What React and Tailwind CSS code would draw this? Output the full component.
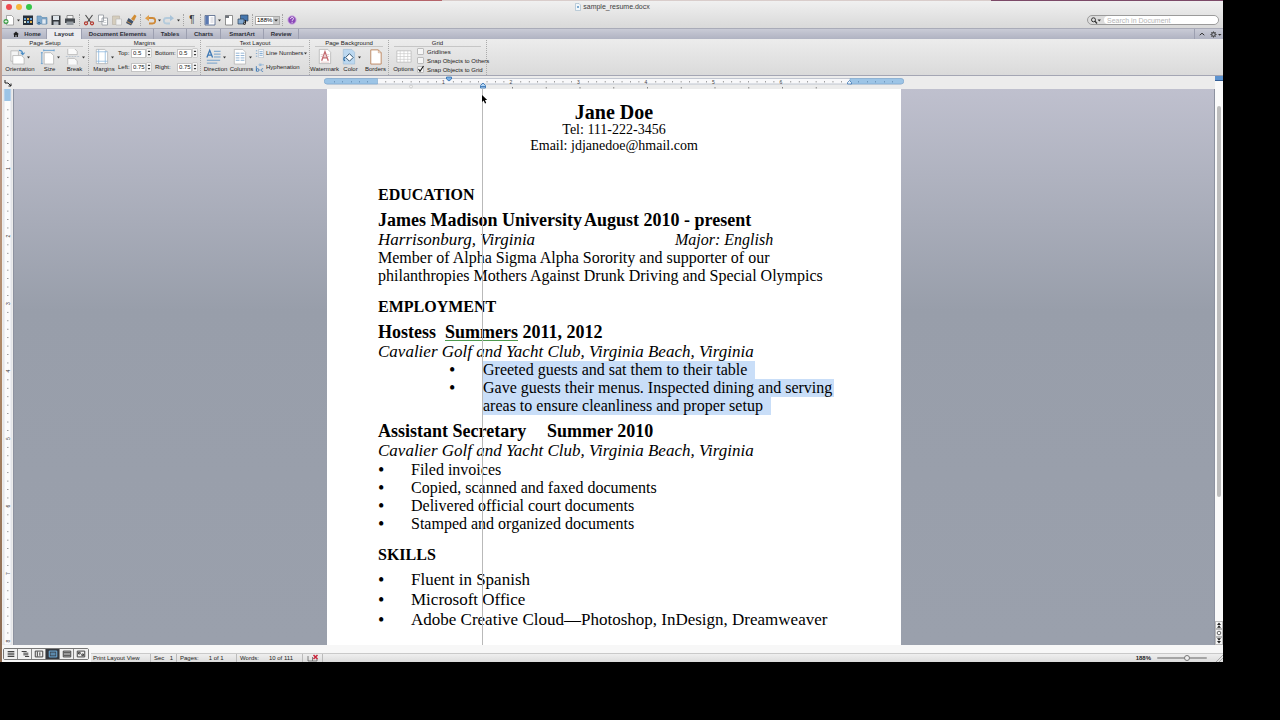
import { useState } from "react";

// Toolbar bits
function Arrow() {
  return (
    <svg viewBox="0 0 5 12" className="w-[5px] h-3 shrink-0" aria-hidden="true">
      <path d="M1 5.500h3L2.500 7.500z" fill="#333" />
    </svg>
  );
}

function Sep() {
  return (
    <div className="w-[5px] flex justify-center shrink-0">
      <div className="h-3 border-l border-dotted border-[#a5a5a5]" />
    </div>
  );
}

function Tool({ label, children }) {
  return (
    <button aria-label={label} className="w-[14px] h-[14px] shrink-0 flex items-center justify-center">
      <svg viewBox="0 0 12 12" className="w-3 h-3" fill="none">
        {children}
      </svg>
    </button>
  );
}

function Toolbar() {
  return (
    <div className="flex items-center h-[14px]">
      <Tool label="New">
        <path d="M3.500 1.500h5l2 2v7.500h-7z" fill="#fff" stroke="#888" strokeWidth=".7" />
        <circle cx="3" cy="7.500" r="2.500" fill="#3e9c46" />
        <path d="M1.500 7.500h3M3 6v3" stroke="#fff" strokeWidth=".8" />
      </Tool>
      <Arrow />
      <Tool label="Gallery">
        <path d="M1 1.500h10v9.500H1z" fill="#27303b" />
        <path d="M2 4h2v2H2zM8 4h2v2H8zM5 7h2v2H5z" fill="#69a7dc" />
        <path d="M5 4h2v2H5zM8 7h2v2H8z" fill="#e3b04c" />
        <path d="M2 7h2v2H2z" fill="#d9e4d2" />
      </Tool>
      <Tool label="Open">
        <path d="M1 2h4l1 1.500h5V10H1z" fill="#7fa9cc" stroke="#5886ad" strokeWidth=".6" />
        <path d="M6 5h4v5H6z" fill="#dfeaf4" stroke="#6d8fae" strokeWidth=".5" />
        <path d="M3 11V8m-1.500 1.500L3 8l1.500 1.500" stroke="#3b6b97" />
      </Tool>
      <Tool label="Save">
        <path d="M1.500 1.500h9v9.500h-9z" fill="#34383d" />
        <path d="M3 2h6v4H3z" fill="#dfe5ea" />
        <path d="M3.500 7.500h5V11h-5z" fill="#b7bdc4" />
      </Tool>
      <Tool label="Print">
        <path d="M3 1.500h6V5H3z" fill="#f3f3f3" stroke="#555" strokeWidth=".6" />
        <path d="M1 4.500h10V9H1z" fill="#44484d" />
        <path d="M2.500 7.500h7V11h-7z" fill="#93999f" />
      </Tool>
      <Sep />
      <Tool label="Cut">
        <path d="M2.500 1l5 7M9.500 1l-5 7" stroke="#4b4b4b" strokeWidth="1.100" />
        <circle cx="3" cy="9.300" r="1.500" stroke="#b3372c" strokeWidth="1.200" />
        <circle cx="9" cy="9.300" r="1.500" stroke="#b3372c" strokeWidth="1.200" />
      </Tool>
      <Tool label="Copy">
        <path d="M1.500 1h5v6.500h-5zM5 4h5.500v7H5z" fill="#fff" stroke="#8f959c" strokeWidth=".8" />
        <path d="M6.300 6.500h3M6.300 8.500h3" stroke="#b3b8bd" strokeWidth=".6" />
      </Tool>
      <Tool label="Paste">
        <path d="M1.500 2h7v8.500h-7z" fill="#d5cdbd" stroke="#b8b0a2" strokeWidth=".6" />
        <path d="M5 5h5.500v6H5z" fill="#f1f1f1" stroke="#b5b5b5" strokeWidth=".6" />
      </Tool>
      <Tool label="Format painter">
        <path d="M6 5L9.500.5l2 1.500L9 7z" fill="#d18d34" />
        <path d="M3.500 4l5 3.500-2.500 4-5-2.500z" fill="#41536c" />
        <path d="M2 7.500l4.500 2.500" stroke="#c88c45" />
      </Tool>
      <Sep />
      <Tool label="Undo">
        <path d="M4 4h4.500a2.500 2.500 0 010 5.500H5" stroke="#cf8a38" strokeWidth="1.800" />
        <path d="M5 1L1 4.200l4 3z" fill="#e0a04c" />
      </Tool>
      <Arrow />
      <Tool label="Redo">
        <path d="M8 4H3.500a2.500 2.500 0 000 5.500H7" stroke="#b4cbdc" strokeWidth="1.800" />
        <path d="M7 1l4 3.200-4 3z" fill="#a9c3d8" />
      </Tool>
      <Arrow />
      <Sep />
      <button aria-label="Show formatting" className="w-3 text-[10px] leading-3 text-[#333]">¶</button>
      <Sep />
      <Tool label="Sidebar">
        <path d="M1 1.500h10v9.500H1z" fill="#fff" stroke="#4d5f85" strokeWidth=".8" />
        <path d="M1.300 2h3.500v8.500H1.300z" fill="#5a78b0" />
        <path d="M6.500 4h3M6.500 6h3M6.500 8h3" stroke="#aab" strokeWidth=".6" />
      </Tool>
      <Arrow />
      <Tool label="Toolbox">
        <path d="M2.500 1.500h7V11h-7z" fill="#fff" stroke="#777" strokeWidth=".8" />
        <path d="M2 1.500h4v2.500H2z" fill="#70757c" />
      </Tool>
      <Tool label="Media browser">
        <path d="M3.500 1h7.500v6H3.500z" fill="#4576ae" stroke="#2d3f56" strokeWidth=".7" />
        <path d="M1 5h6v5H1z" fill="#82a8cf" stroke="#2d3f56" strokeWidth=".7" />
        <path d="M8.500 6v3.500a1 1 0 11-1-1" stroke="#222" />
      </Tool>
      <Sep />
      <div className="relative">
        <select
          aria-label="Zoom"
          defaultValue="188%"
          className="appearance-none block w-[25px] h-[9px] pl-px border border-[#aaa] bg-white text-[6px] leading-[7px] text-black"
        >
          <option>188%</option>
          <option>100%</option>
        </select>
        <div className="absolute right-px top-px w-[6px] h-[7px] bg-[#c9c9c9] pointer-events-none flex items-center justify-center">
          <svg viewBox="0 0 4 3" className="w-1 h-[3px]"><path d="M0 .5h4l-2 2z" fill="#333" /></svg>
        </div>
      </div>
      <Sep />
      <Tool label="Help">
        <circle cx="6" cy="6" r="4.200" fill="#8b48b8" stroke="#d3b8e2" />
        <path d="M4.600 4.900c0-2 2.900-1.900 2.900-.2 0 1-1.400 1.100-1.400 2.100M6.100 7.800v1" stroke="#fff" strokeWidth=".9" />
      </Tool>
    </div>
  );
}

function TitleBar() {
  return (
    <header className="h-[27px] shrink-0 bg-linear-to-b from-[#f0f0f0] to-[#d9d9d9] flex flex-col">
      <div className="grid grid-cols-3 items-center h-[12px]">
        <div className="flex gap-1 pl-1">
          <button aria-label="Close" className="size-[6px] rounded-full bg-[#ee4b50]" />
          <button aria-label="Minimize" className="size-[6px] rounded-full bg-[#f6b53b]" />
          <button aria-label="Zoom window" className="size-[6px] rounded-full bg-[#35c649]" />
        </div>
        <div className="flex items-center justify-center gap-[2px] text-[7px] leading-[12px] text-[#3c3c3c]">
          <svg viewBox="0 0 6 8" className="w-[6px] h-2">
            <path d="M.5.5h3.500l1.500 1.500v5.500h-5z" fill="#f2f7fb" stroke="#a5bccd" strokeWidth=".7" />
            <path d="M2 3h2v2H2z" fill="#7fabd0" />
          </svg>
          <h1>sample_resume.docx</h1>
        </div>
      </div>
      <div className="flex items-center justify-between pr-1">
        <Toolbar />
        <div className="flex items-center w-[132px] h-[10px] rounded-full border border-[#9b9b9b] bg-[#dcdcdc] overflow-hidden">
          <svg viewBox="0 0 16 9" className="w-4 h-[9px] shrink-0" fill="none">
            <circle cx="5.500" cy="3.800" r="2" stroke="#333" />
            <path d="M7 5.300L9 7.500" stroke="#333" strokeWidth="1.300" />
            <path d="M9.500 3.500h3.500l-1.750 2z" fill="#333" />
          </svg>
          <input
            type="search"
            aria-label="Search in Document"
            placeholder="Search in Document"
            className="flex-1 min-w-0 h-full rounded-full bg-white pl-[3px] text-[7px] leading-[8px] placeholder:text-[#b5b5b5] outline-none"
          />
        </div>
      </div>
    </header>
  );
}

const tabs = [
  { name: "Home", width: "w-[45px]" },
  { name: "Layout", width: "w-[35px]" },
  { name: "Document Elements", width: "w-[72px]" },
  { name: "Tables", width: "w-[33px]" },
  { name: "Charts", width: "w-[34px]" },
  { name: "SmartArt", width: "w-[43px]" },
  { name: "Review", width: "w-[35px]" },
];

function Tabs({ active, onSelect }) {
  return (
    <nav className="h-[11px] shrink-0 flex bg-linear-to-b from-[#c9cbd6] to-[#b0b3c2] border-t border-[#a9abb8]">
      {tabs.map((t) => (
        <button
          key={t.name}
          onClick={() => onSelect(t.name)}
          className={`${t.width} shrink-0 flex items-center justify-center gap-[5px] border-r border-[#9c9fb0] text-[6px] leading-[8px] font-bold text-[#2d2f38] ${
            t.name === "Home" ? "pl-[6px]" : ""
          } ${active === t.name ? "bg-[#ececf0]" : ""}`}
        >
          {t.name === "Home" && (
            <svg viewBox="0 0 6 6" className="size-[6px]"><path d="M3 .5L0 3.300h1V6h1.500V4h1v2H5V3.300h1z" fill="#222" /></svg>
          )}
          <span>{t.name}</span>
        </button>
      ))}
      <div className="ml-auto flex items-center gap-[5px] pl-1 pr-px border-l border-[#9c9fb0]">
        <button aria-label="Collapse ribbon">
          <svg viewBox="0 0 6 6" className="size-[6px]" fill="none"><path d="M.7 4.200L3 2.200l2.300 2" stroke="#333" /></svg>
        </button>
        <button aria-label="Ribbon preferences">
          <svg viewBox="0 0 12 7" className="w-3 h-[7px]" fill="none">
            <circle cx="3.500" cy="3.500" r="1.800" stroke="#444" strokeWidth="1.200" />
            <path d="M3.500.3v1M3.500 5.700v1M.3 3.500h1M5.700 3.500h1M1.200 1.200l.7.700M5.100 5.100l.7.700M1.200 5.800l.7-.7M5.100 1.900l.7-.7" stroke="#444" strokeWidth=".8" />
            <path d="M8 3h3.500L9.750 4.800z" fill="#333" />
          </svg>
        </button>
      </div>
    </nav>
  );
}

function Group({ title, width, children }) {
  return (
    <section className={`${width} shrink-0 flex flex-col border-r border-dotted border-[#aaa] px-px`}>
      <h2 className="text-center text-[6px] leading-[6px] border-b border-[#c6c6c6] mx-1">{title}</h2>
      <div className="flex flex-1">{children}</div>
    </section>
  );
}

function BigButton({ label, width, arrow, children }) {
  return (
    <button className={`${width} shrink-0 flex flex-col items-center justify-start pt-px`}>
      <span className="flex items-center">
        <svg viewBox="0 0 18 18" className="size-[17px]" fill="none">
          {children}
        </svg>
        {arrow && <Arrow />}
      </span>
      <span className="text-[6px] leading-[8px] whitespace-nowrap">{label}</span>
    </button>
  );
}

function MarginField({ label, value, labelWidth }) {
  const id = `margin-${label}`;
  return (
    <div className="flex items-center h-[10px]">
      <label htmlFor={id} className={labelWidth}>{label}:</label>
      <input id={id} defaultValue={value} className="w-[15px] h-[9px] border border-[#c4c4c4] bg-white pl-px text-[6px] leading-[7px]" />
      <svg viewBox="0 0 6 10" className="w-[6px] h-[10px]">
        <rect x=".5" y=".5" width="5" height="9" rx="1" fill="#f5f5f5" stroke="#b5b5b5" strokeWidth=".6" />
        <path d="M1.700 4L3 2.200 4.300 4zM1.700 6L3 7.800 4.300 6z" fill="#222" />
      </svg>
    </div>
  );
}

function Check({ label, checked }) {
  return (
    <label className="relative flex items-center gap-[3px] h-[9px] whitespace-nowrap">
      <input
        type="checkbox"
        defaultChecked={checked}
        className="peer appearance-none size-[7px] rounded-[1px] border border-[#bdbdbd] bg-[#f6f6f6]"
      />
      <svg viewBox="0 0 8 8" className="hidden peer-checked:block absolute left-0 top-0 size-2 pointer-events-none" fill="none">
        <path d="M1.500 4l1.500 2.300L6.500 1" stroke="#111" strokeWidth="1.100" />
      </svg>
      {label}
    </label>
  );
}

function Ribbon() {
  return (
    <div className="h-[37px] shrink-0 pt-px flex bg-linear-to-b from-[#ececec] to-[#dadada] border-b border-[#a4a6b4] text-[6px] leading-[8px] text-[#222]">
      <Group title="Page Setup" width="w-[87px]">
        <BigButton label="Orientation" width="w-[34px]" arrow>
          <path d="M2 3h8v11H2z" fill="#f4f4f4" stroke="#b0b0b0" strokeWidth=".8" />
          <path d="M4 8h9l3 2.500V17H4z" fill="#fff" stroke="#b0b0b0" strokeWidth=".8" />
          <path d="M10.500 2.500c3 0 4 1 4 4M12.500 5l2 2 2-2" stroke="#4f8fc6" strokeWidth="1.200" />
        </BigButton>
        <BigButton label="Size" width="w-[25px]" arrow>
          <path d="M5.500 5h7l3 3v9h-10z" fill="#fff" stroke="#b0b0b0" strokeWidth=".8" />
          <path d="M3 4.500v12M2 5h2M2 16.500h2M5 2.500h11M5 1.500v2M16 1.500v2" stroke="#68a0d0" />
        </BigButton>
        <BigButton label="Break" width="w-[25px]" arrow>
          <path d="M4 1v6h10V3.500L11.500 1M4 17.500V11h7l3 2.500v4" fill="#fafafa" stroke="#b0b0b0" strokeWidth=".8" />
          <path d="M2 9h14" stroke="#b9c3cf" strokeDasharray="2 1" />
        </BigButton>
      </Group>
      <Group title="Margins" width="w-[112px]">
        <BigButton label="Margins" width="w-[28px]" arrow>
          <path d="M3.500 1.500h9l3 3v12h-12z" fill="#fff" stroke="#b0b0b0" strokeWidth=".8" />
          <path d="M6 1.500v15M13 3v13.500M3.500 4h12M3.500 14h12" stroke="#8ab6dd" strokeWidth=".8" />
        </BigButton>
        <div className="flex flex-col gap-1 pt-px">
          <MarginField label="Top" value="0.5" labelWidth="w-[13px]" />
          <MarginField label="Left" value="0.75" labelWidth="w-[13px]" />
        </div>
        <div className="flex flex-col gap-1 pl-[3px] pt-px">
          <MarginField label="Bottom" value="0.5" labelWidth="w-[22px]" />
          <MarginField label="Right" value="0.75" labelWidth="w-[22px]" />
        </div>
      </Group>
      <Group title="Text Layout" width="w-[109px]">
        <BigButton label="Direction" width="w-[27px]" arrow>
          <path d="M2 10L5 2.500 8 10M3.200 7.500h3.600" stroke="#3f79b5" strokeWidth="1.400" />
          <path d="M9.500 3.500h7M9.500 6.500h7M9.500 9.500h7M2 13h14M2 16h11" stroke="#6c9cca" />
        </BigButton>
        <BigButton label="Columns" width="w-[25px]" arrow>
          <path d="M3.500 1.500h9l3 3v12.500h-12z" fill="#fff" stroke="#b0b0b0" strokeWidth=".8" />
          <path d="M5 5.500h4M5 8h4M5 10.500h4M5 13h4M10.200 5.500h4M10.200 8h4M10.200 10.500h4M10.200 13h4" stroke="#6e9bc6" strokeWidth=".8" />
        </BigButton>
        <div className="flex flex-col gap-1 pt-px pl-px">
          <button className="flex items-center h-[10px] whitespace-nowrap">
            <svg viewBox="0 0 10 10" className="size-[9px] mr-[2px]" fill="none">
              <path d="M4 .5h5.500v9H4z" fill="#f5f8fb" stroke="#a9b4bf" strokeWidth=".6" />
              <path d="M1 2h1.500M1 5h1.500M1 8h1.500M5 3h3.500M5 5h3.500M5 7h3.500" stroke="#5f92c6" strokeWidth=".8" />
            </svg>
            Line Numbers <Arrow />
          </button>
          <button className="flex items-center h-[10px] whitespace-nowrap">
            <svg viewBox="0 0 10 10" className="size-[9px] mr-[2px]" fill="none">
              <path d="M1.500 3.500v6" stroke="#3f79b5" />
              <circle cx="3" cy="7.800" r="1.500" stroke="#3f79b5" />
              <path d="M9 6.500a1.500 1.500 0 100 2.700" stroke="#3f79b5" />
              <circle cx="5.500" cy="2" r="1" stroke="#7aa8d6" strokeWidth=".8" />
              <path d="M6.800.8v2.400M8 2h1.800" stroke="#7aa8d6" strokeWidth=".8" />
            </svg>
            Hyphenation
          </button>
        </div>
      </Group>
      <Group title="Page Background" width="w-[79px]">
        <BigButton label="Watermark" width="w-[27px]">
          <path d="M3.500 1.500h9l3 3v12h-12z" fill="#fff" stroke="#b0b0b0" strokeWidth=".8" />
          <path d="M6 13.500L9.500 4l3.500 9.500M7.200 10.500h4.600" stroke="#c4696f" strokeWidth="1.400" />
          <path d="M5 7h9M5 9h9M5 15h9" stroke="#d8a6a9" strokeWidth=".6" />
        </BigButton>
        <BigButton label="Color" width="w-[25px]" arrow>
          <path d="M3.500 1.500h9l3 3v12.500h-12z" fill="#bcd8f0" stroke="#9fbdd8" strokeWidth=".7" />
          <path d="M6 10l4-4 4 4-4 4z" fill="#fff" stroke="#31536f" />
          <path d="M5 9.500c-1.500 2-1 4 .5 4" stroke="#2f6ea8" strokeWidth="1.300" />
        </BigButton>
        <BigButton label="Borders" width="w-[25px]">
          <path d="M4 2h8l3 3v12H4z" fill="#fff" stroke="#bd8760" />
          <path d="M12 2v3h3" stroke="#bd8760" strokeWidth=".6" />
        </BigButton>
      </Group>
      <Group title="Grid" width="w-[98px]">
        <BigButton label="Options" width="w-[27px]">
          <path d="M2 3h15v12H2z" fill="#fff" stroke="#b0b0b0" strokeWidth=".7" />
          <path d="M2 6h15M2 9h15M2 12h15M5.500 3v12M9.500 3v12M13.500 3v12" stroke="#c9c9c9" strokeWidth=".7" />
        </BigButton>
        <div className="flex flex-col">
          <Check label="Gridlines" />
          <Check label="Snap Objects to Others" />
          <Check label="Snap Objects to Grid" checked />
        </div>
      </Group>
    </div>
  );
}

const INCH = 67.5;
const eighths = Array.from({ length: 56 }, (_, i) => i + 1).filter((i) => i % 8 !== 0);

function Ruler() {
  return (
    <svg viewBox="0 0 580 13" className="w-[580px] h-[13px] shrink-0" role="img" aria-label="Horizontal ruler">
      <rect x=".5" y="2.500" width="579" height="5.500" rx="2.750" fill="#f8f8fa" stroke="#aeb4c2" strokeWidth=".7" />
      <path d="M3 2.500h50.500V8H3A2.750 2.750 0 013 2.500zM526 2.500h51a2.750 2.750 0 010 5.500h-51z" fill="#9cc4e6" stroke="#7ba6cf" strokeWidth=".6" />
      {eighths.map((i) => (
        <rect key={i} x={53 + (i * INCH) / 8} y="5" width=".7" height="1.500" fill="#777" />
      ))}
      {[10, 18, 27, 35, 43, 534, 543, 551, 560, 568].map((x) => (
        <rect key={x} x={x} y="5" width=".7" height="1.500" fill="#5f87ac" />
      ))}
      {[1, 2, 3, 4, 5, 6].map((n) => (
        <text key={n} x={52 + n * INCH} y="7.500" fontSize="5" textAnchor="middle" fill="#444">{n}</text>
      ))}
      {[4, 5, 6, 7, 8, 9, 10, 11, 12, 13].map((n) => (
        <rect key={n} x={53 + (n * INCH) / 2} y="11" width="1" height="1.500" fill="#888" />
      ))}
      <path d="M122.500 1h5v2l-2.500 2-2.500-2z" fill="#7cb2e6" stroke="#2f6cae" strokeWidth=".8" />
      <path d="M156.500 12V9.500L159 7l2.500 2.500V12zM156.500 10.500h5" fill="#b5d6f5" stroke="#2f6cae" strokeWidth=".8" />
      <circle cx="87" cy="10.500" r="1.500" fill="#f2f2f2" stroke="#bbb" strokeWidth=".6" />
      <path d="M523.500 8V6.500l2-2 2 2V8z" fill="#e5f0fa" stroke="#2f6cae" strokeWidth=".7" />
    </svg>
  );
}

function SideRuler() {
  return (
    <svg viewBox="0 0 10 556" preserveAspectRatio="xMinYMin slice" className="w-[10px] h-full" role="img" aria-label="Vertical ruler">
      <rect x="2" y="0" width="7" height="556" fill="#fbfbfc" stroke="#cfd4dc" strokeWidth=".6" />
      <rect x="2.300" y="0" width="6.400" height="12" fill="#9cc4e6" />
      {Array.from({ length: 64 }, (_, i) => i + 1)
        .filter((i) => i % 8 !== 0)
        .map((i) => (
          <rect key={i} x="5" y={12 + (i * INCH) / 8} width="1.500" height=".8" fill="#888" />
        ))}
      {[1, 2, 3, 4, 5, 6, 7, 8].map((n) => (
        <text
          key={n}
          transform={`translate(7.500 ${13.5 + n * INCH}) rotate(-90)`}
          fontSize="5"
          fill="#333"
        >
          {n}
        </text>
      ))}
    </svg>
  );
}

function Bullets({ items, large }) {
  return (
    <ul className={large ? "text-[17px] leading-[20px]" : "text-[16px] leading-[18px]"}>
      {items.map((text) => (
        <li key={text} className="flex">
          <span className="w-[33px] shrink-0 text-[18px]">•</span>
          {text}
        </li>
      ))}
    </ul>
  );
}

const sectionTitle = "text-[16px] leading-[20px] font-bold";
const jobTitle = "flex text-[18px] leading-[20px] font-bold";
const place = "flex text-[17px] leading-[19px] italic";

function Resume() {
  return (
    <article className="w-[574px] shrink-0 bg-white pl-[51px] pt-[13px] text-black whitespace-nowrap font-['Liberation_Serif',serif]">
      <div className="text-center pr-[51px] text-[14px] leading-[16px]">
        <h2 className="text-[20px] leading-[20px] font-bold">Jane Doe</h2>
        <p>Tel: 111-222-3456</p>
        <p>Email: jdjanedoe@hmail.com</p>
      </div>

      {/* Education */}
      <h3 className={`${sectionTitle} mt-[31px]`}>EDUCATION</h3>
      <h4 className={`${jobTitle} mt-[5px]`}>
        <span className="min-w-[202px] pr-[2px]">James Madison University</span>
        <span>August 2010 - present</span>
      </h4>
      <p className={place}>
        <span className="w-[297px]">Harrisonburg, Virginia</span>
        <span className="text-[16px]">Major: English</span>
      </p>
      <p className="text-[16px] leading-[18px]">
        Member of Alpha Sigma Alpha Sorority and supporter of our
        <br />
        philanthropies Mothers Against Drunk Driving and Special Olympics
      </p>

      {/* Employment */}
      <h3 className={`${sectionTitle} mt-[12px]`}>EMPLOYMENT</h3>
      <h4 className={`${jobTitle} mt-[5px]`}>
        <span className="w-[67px]">Hostess</span>
        <span>
          <span className="underline decoration-[#4f9a4f] decoration-1 underline-offset-2">Summers</span> 2011, 2012
        </span>
      </h4>
      <p className={place}>Cavalier Golf and Yacht Club, Virginia Beach, Virginia</p>
      <ul className="text-[16px] leading-[18px] pl-[71px]">
        <li className="flex">
          <span className="w-[34px] shrink-0 text-[18px]">•</span>
          <span className="bg-[#c9def8] pr-2">Greeted guests and sat them to their table</span>
        </li>
        <li className="flex">
          <span className="w-[34px] shrink-0 text-[18px]">•</span>
          <span className="flex flex-col items-start">
            <span className="bg-[#c9def8] pr-[2px]">Gave guests their menus. Inspected dining and serving</span>
            <span className="bg-[#c9def8] pr-2">areas to ensure cleanliness and proper setup</span>
          </span>
        </li>
      </ul>
      <h4 className={`${jobTitle} mt-[6px]`}>
        <span className="w-[169px]">Assistant Secretary</span>
        <span>Summer 2010</span>
      </h4>
      <p className={`${place} mb-px`}>Cavalier Golf and Yacht Club, Virginia Beach, Virginia</p>
      <Bullets
        items={["Filed invoices", "Copied, scanned and faxed documents", "Delivered official court documents", "Stamped and organized documents"]}
      />

      {/* Skills */}
      <h3 className={`${sectionTitle} mt-[12px] mb-[5px]`}>SKILLS</h3>
      <Bullets large items={["Fluent in Spanish", "Microsoft Office", "Adobe Creative Cloud—Photoshop, InDesign, Dreamweaver"]} />
    </article>
  );
}

const views = [
  ["Draft", "M2 3h8M2 5h8M2 7h8M2 9h8"],
  ["Outline", "M2 3h6M4 5h6M4 7h6M6 9h5"],
  ["Publishing", "M1.500 2.500h9v7h-9zM4 3v6M7 4v4"],
  ["Print Layout", "M1.500 2.500h9v7h-9zM3 5h6M3 7h6"],
  ["Notebook", "M1.500 2.500h9v7h-9zM2 4h8M2 6h8M2 8h8"],
  ["Full Screen", "M1.500 2.500h9v7h-9zM3 4h2v2H3zM7 6h2v2H7z"],
];

function StatusBar({ zoom, onZoom }) {
  return (
    <footer className="h-[17px] shrink-0 flex items-end bg-[#f7f7f7] text-[6px] leading-[8px] text-[#222]">
      <div className="flex self-center border border-[#777] rounded-[2px] ml-px mr-[2px] divide-x divide-[#888]">
        {views.map(([name, d]) => (
          <button
            key={name}
            aria-label={name}
            className={`w-[14px] h-[10px] flex items-center justify-center ${name === "Print Layout" ? "bg-[#34383f]" : "bg-[#f0f0f0]"}`}
          >
            <svg viewBox="0 0 12 12" className="size-[10px]" fill="none">
              <path d={d} stroke={name === "Print Layout" ? "#6fb2e4" : "#444"} strokeWidth="1.200" />
            </svg>
          </button>
        ))}
      </div>
      <div className="flex-1 flex h-[9px] bg-linear-to-b from-[#efefef] to-[#dcdcdc] border-t border-[#c9c9c9]">
        <span className="w-[60px] pl-[2px] border-r border-[#bbb]">Print Layout View</span>
        <span className="w-[26px] px-[3px] flex justify-between border-r border-[#bbb]"><span>Sec</span><span>1</span></span>
        <span className="w-[60px] pl-[3px] flex gap-[10px] border-r border-[#bbb]"><span>Pages:</span><span>1 of 1</span></span>
        <span className="w-[66px] pl-[3px] flex gap-[10px] border-r border-[#bbb]"><span>Words:</span><span>10 of 111</span></span>
        <button aria-label="Spelling status" className="w-5 flex justify-center border-r border-[#bbb]">
          <svg viewBox="0 0 12 8" className="w-3 h-2" fill="none">
            <path d="M1 2v5h9V5M5.500 3v4" stroke="#666" strokeWidth=".8" />
            <path d="M6.500 1l4 4M10.500 1l-4 4" stroke="#c8233a" strokeWidth="1.500" />
          </svg>
        </button>
        <div className="ml-auto flex items-center">
          <label htmlFor="zoom-slider" className="font-bold pr-[6px]">{zoom}%</label>
          <input
            id="zoom-slider"
            type="range"
            min="10"
            max="300"
            value={zoom}
            onChange={(e) => onZoom(Number(e.target.value))}
            className="appearance-none w-[50px] h-[2px] bg-[#a5a5a5] rounded-full [&::-webkit-slider-thumb]:appearance-none [&::-webkit-slider-thumb]:size-[6px] [&::-webkit-slider-thumb]:rounded-full [&::-webkit-slider-thumb]:bg-[#eee] [&::-webkit-slider-thumb]:border [&::-webkit-slider-thumb]:border-[#777]"
          />
          <svg viewBox="0 0 8 8" className="size-2 ml-2"><path d="M1 8l7-7M4 8l4-4" stroke="#999" strokeWidth=".8" /></svg>
        </div>
      </div>
    </footer>
  );
}

export default function App() {
  const [active, setActive] = useState("Layout");
  const [zoom, setZoom] = useState(188);

  return (
    <div className="h-screen bg-black pr-[57px] pb-[58px] font-['Liberation_Sans',sans-serif]">
      <div className="h-full flex flex-col pl-[2px] bg-linear-to-b from-[#c4a49c] via-[#b08a68] to-[#8a6a52]">
        {/* Desktop showing above the window */}
        <div className="h-px shrink-0 flex">
          <div className="w-[36%] bg-[#b5646a]" />
          <div className="flex-1 bg-[#d9cdcb]" />
          <div className="w-[19%] bg-[#7c4a68]" />
        </div>
        <TitleBar />
        <Tabs active={active} onSelect={setActive} />
        <Ribbon />

        <main className="flex-1 min-h-0 flex bg-[#ececec]">
          <div className="w-[11px] shrink-0 flex flex-col">
            <button aria-label="Tab stop" className="h-[13px] shrink-0 pl-[2px]">
              <svg viewBox="0 0 8 8" className="size-2" fill="none">
                <path d="M1 1v3h3M4 4l3 3M7 4.500V7H4.500" stroke="#222" />
              </svg>
            </button>
            <SideRuler />
          </div>

          <div className="flex-1 min-w-0 flex flex-col">
            <div className="flex justify-center h-[13px] shrink-0">
              <Ruler />
            </div>
            <div className="flex-1 min-h-0 flex justify-center overflow-hidden border-x border-[#8d92a0] bg-linear-to-b from-[#bfc0ce] from-0% via-[#989eaa] via-40% to-[#9aa0ac]">
              <div className="relative flex">
                <Resume />
                {/* Indent guide and pointer */}
                <div className="absolute inset-y-0 left-[155px] w-px bg-[#b9b9b9]" />
                <svg viewBox="0 0 8 10" className="absolute left-[155px] top-[6px] w-2 h-[10px]">
                  <path d="M0 0v7l1.600-1.500L3 8.500l1.200-.6L3 5h2.200z" fill="#000" />
                </svg>
              </div>
            </div>
          </div>

          <div className="w-2 shrink-0 flex flex-col bg-[#fafafa]">
            <div className="h-[5px] bg-[#5d93cf] border-b border-[#345f96]" />
            <div className="flex-1 flex justify-center pt-[25px]">
              <div className="w-1 h-[76%] rounded-full bg-[#bdbdbd]" />
            </div>
            {["Previous page", "Browse object", "Next page"].map((name) => (
              <button key={name} aria-label={name} className="h-[8px] flex items-center justify-center border border-[#bbb] bg-[#f5f5f5]">
                <svg viewBox="0 0 6 6" className="size-[6px]" fill="none">
                  {name === "Browse object" && <circle cx="3" cy="3" r="1.800" stroke="#444" strokeWidth=".8" />}
                  {name === "Previous page" && <path d="M1 3l2-2.500L5 3zM1 5.800l2-2.500 2 2.500z" fill="#222" />}
                  {name === "Next page" && <path d="M1 .3l2 2.500L5 .3zM1 3l2 2.500L5 3z" fill="#222" />}
                </svg>
              </button>
            ))}
          </div>
        </main>

        <StatusBar zoom={zoom} onZoom={setZoom} />
      </div>
    </div>
  );
}
